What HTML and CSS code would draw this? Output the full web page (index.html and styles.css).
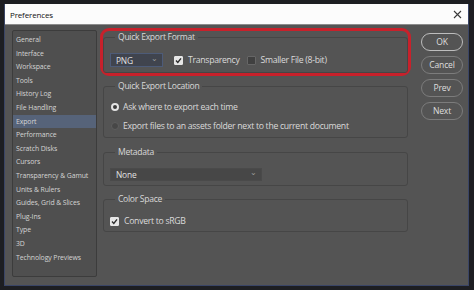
FILE: index.html
```html
<!DOCTYPE html>
<html lang="en">
<head>
    <meta charset="UTF-8">
    <meta name="viewport" content="width=device-width, initial-scale=1.0">
    <title>Preferences</title>
    <link rel="stylesheet" href="styles.css">
</head>
<body>
    <div class="window">
        <div class="titlebar">
            <span class="title">Preferences</span>
            <svg class="close" width="9" height="9" viewBox="0 0 9 9">
                <path d="M1 1 L8 8 M8 1 L1 8" stroke="#3a3a3a" stroke-width="1.1" fill="none"/>
            </svg>
        </div>

        <div class="content">
            <ul class="sidebar">
                <li>General</li>
                <li>Interface</li>
                <li>Workspace</li>
                <li>Tools</li>
                <li>History Log</li>
                <li>File Handling</li>
                <li class="active">Export</li>
                <li>Performance</li>
                <li>Scratch Disks</li>
                <li>Cursors</li>
                <li>Transparency &amp; Gamut</li>
                <li>Units &amp; Rulers</li>
                <li>Guides, Grid &amp; Slices</li>
                <li>Plug-Ins</li>
                <li>Type</li>
                <li>3D</li>
                <li>Technology Previews</li>
            </ul>

            <div class="main">
                <div class="highlight">
                    <fieldset class="group group-format">
                        <legend>Quick Export Format</legend>
                        <div class="row">
                            <div class="select select-format">PNG <span class="chev">&#8964;</span></div>
                            <span class="check checked">
                                <svg width="7" height="7" viewBox="0 0 7 7"><path d="M1 3.6 L2.8 5.4 L6 1.4" stroke="#2b2b2b" stroke-width="1.4" fill="none"/></svg>
                            </span>
                            <span class="label">Transparency</span>
                            <span class="check"></span>
                            <span class="label">Smaller File (8-bit)</span>
                        </div>
                    </fieldset>
                </div>

                <fieldset class="group group-location">
                    <legend>Quick Export Location</legend>
                    <div class="row">
                        <span class="radio checked"></span>
                        <span class="label">Ask where to export each time</span>
                    </div>
                    <div class="row">
                        <span class="radio"></span>
                        <span class="label">Export files to an assets folder next to the current document</span>
                    </div>
                </fieldset>

                <fieldset class="group group-meta">
                    <legend>Metadata</legend>
                    <div class="select select-meta">None <span class="chev">&#8964;</span></div>
                </fieldset>

                <fieldset class="group group-color">
                    <legend>Color Space</legend>
                    <div class="row">
                        <span class="check checked">
                            <svg width="7" height="7" viewBox="0 0 7 7"><path d="M1 3.6 L2.8 5.4 L6 1.4" stroke="#2b2b2b" stroke-width="1.4" fill="none"/></svg>
                        </span>
                        <span class="label">Convert to sRGB</span>
                    </div>
                </fieldset>
            </div>

            <div class="buttons">
                <button class="btn btn-ok">OK</button>
                <button class="btn">Cancel</button>
                <button class="btn">Prev</button>
                <button class="btn">Next</button>
            </div>
        </div>
    </div>
</body>
</html>
```

FILE: styles.css
```css
body {
    margin: 0;
    background: #1d1e22;
    font-family: "Open Sans", sans-serif;
    color: #dcdcdc;
}

.window {
    margin: 4px 0 0 4px;
    width: 465px;
    height: 282px;
    box-sizing: border-box;
    border: 1px solid #3a4566;
    border-top: none;
    background: #545454;
    display: flex;
    flex-direction: column;
}

.titlebar {
    height: 21px;
    box-sizing: border-box;
    background: #fcfcfc;
    border-bottom: 1px solid #8c8c8c;
    display: flex;
    align-items: center;
    justify-content: space-between;
    padding: 0 6px 0 5px;
}

.title {
    font-size: 8px;
    letter-spacing: -0.15px;
    color: #111;
}

.content {
    flex: 1;
    display: flex;
    padding: 5px 0 0 7px;
}

/* left list */
.sidebar {
    list-style: none;
    margin: 0;
    padding: 2px 0 0 0;
    width: 85px;
    height: 247px;
    box-sizing: border-box;
    background: #4f4f4f;
    border: 1px solid #3c3c3c;
    border-radius: 2px;
}

.sidebar li {
    height: 13.6px;
    line-height: 13.6px;
    font-size: 6.9px;
    letter-spacing: -0.1px;
    padding-left: 3px;
    color: #d4d4d4;
    white-space: nowrap;
}

.sidebar li.active {
    background: #566379;
}

/* middle column */
.main {
    width: 311px;
    margin-left: 3px;
    display: flex;
    flex-direction: column;
}

.highlight {
    margin-top: -2px;
    height: 48px;
    box-sizing: border-box;
    border: 3px solid #c8212b;
    border-radius: 9px;
}

.group {
    margin: 0 3px;
    padding: 0 6px;
    border: 1px solid #464646;
    border-radius: 3px;
    min-width: 0;
}

.highlight .group {
    margin: 0;
}

.group legend {
    margin-left: 5px;
    padding: 0 3px;
    font-size: 8.6px;
    letter-spacing: -0.3px;
    line-height: 13px;
    color: #d8d8d8;
}

.group-format {
    padding-top: 9px;
    padding-bottom: 5px;
}

.group-location {
    margin-top: 4px;
    padding-top: 7px;
    padding-bottom: 4px;
}

.group-location .row + .row {
    margin-top: 5px;
}

.group-meta {
    margin-top: 8px;
    padding-top: 9px;
    padding-bottom: 4px;
}

.group-color {
    margin-top: 7px;
    padding-top: 8px;
    padding-bottom: 3px;
}

.row {
    display: flex;
    align-items: center;
    height: 14px;
}

.label {
    font-size: 8.7px;
    letter-spacing: -0.3px;
    color: #dadada;
    white-space: nowrap;
}

.select {
    height: 14px;
    box-sizing: border-box;
    display: flex;
    align-items: center;
    justify-content: space-between;
    padding: 0 4px 0 5px;
    font-size: 8.4px;
    letter-spacing: -0.2px;
    color: #e0e0e0;
}

.select-format {
    width: 53px;
    background: #40444e;
    border: 1px solid #4d5b78;
}

.select-meta {
    width: 152px;
    height: 13px;
    background: #474747;
    border: 1px solid #4a4a4a;
}

.chev {
    font-size: 8px;
    line-height: 8px;
    color: #9a9a9a;
    margin-top: -5px;
}

.check {
    width: 9px;
    height: 9px;
    box-sizing: border-box;
    border: 1px solid #666;
    background: #404040;
    border-radius: 1px;
    display: flex;
    align-items: center;
    justify-content: center;
    margin-right: 5px;
}

.check.checked {
    background: #e6e6e6;
    border-color: #e6e6e6;
}

.select-format + .check {
    margin-left: 11px;
}

.label + .check {
    margin-left: 8px;
    margin-right: 4px;
}

.radio {
    width: 8px;
    height: 8px;
    box-sizing: border-box;
    border-radius: 50%;
    border: 1px solid #5e5e5e;
    background: #474747;
    margin: 0 4px 0 1px;
}

.radio.checked {
    border: 2.5px solid #e4e4e4;
    background: #3a3a3a;
}

/* right buttons */
.buttons {
    margin-left: 10px;
    margin-top: 3px;
    display: flex;
    flex-direction: column;
    gap: 5px;
}

.btn {
    width: 42px;
    height: 18px;
    padding: 0;
    background: #545454;
    border: 1px solid #7c7c7c;
    border-radius: 9px;
    color: #dedede;
    font-family: "Open Sans", sans-serif;
    font-size: 8.6px;
    letter-spacing: -0.2px;
}

.btn-ok {
    border-color: #bdbdbd;
}
```
